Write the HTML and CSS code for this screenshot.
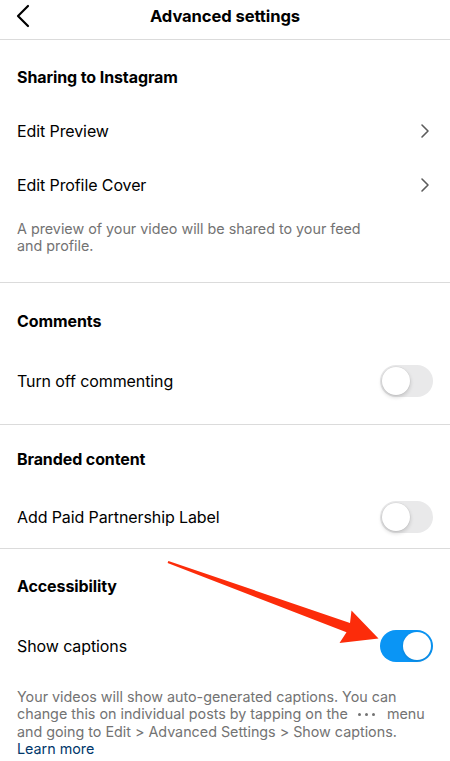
FILE: index.html
```html
<!DOCTYPE html>
<html lang="en">
<head>
<meta charset="utf-8">
<title>Advanced settings</title>
<link rel="stylesheet" href="styles.css">
</head>
<body>
<div class="screen">
  <header class="topbar">
    <button class="back" aria-label="Back">
      <svg width="16" height="24" viewBox="0 0 16 24"><path d="M13 2 L3 12 L13 22" fill="none" stroke="#000" stroke-width="2.2" stroke-linecap="round" stroke-linejoin="round"/></svg>
    </button>
    <h1 class="title">Advanced settings</h1>
  </header>

  <section class="section s1">
    <h2 class="sec-title">Sharing to Instagram</h2>
    <div class="rows g1">
      <div class="row">
        <span class="label">Edit Preview</span>
        <svg class="chev" width="10" height="16" viewBox="0 0 10 16"><path d="M2 2 L8 8 L2 14" fill="none" stroke="#5c5c5c" stroke-width="1.6" stroke-linecap="round" stroke-linejoin="round"/></svg>
      </div>
      <div class="row">
        <span class="label">Edit Profile Cover</span>
        <svg class="chev" width="10" height="16" viewBox="0 0 10 16"><path d="M2 2 L8 8 L2 14" fill="none" stroke="#5c5c5c" stroke-width="1.6" stroke-linecap="round" stroke-linejoin="round"/></svg>
      </div>
    </div>
    <p class="desc d1">A preview of your video will be shared to your feed<br>and profile.</p>
  </section>

  <section class="section s2">
    <h2 class="sec-title">Comments</h2>
    <div class="rows g2">
      <div class="row">
        <span class="label">Turn off commenting</span>
        <span class="switch"><span class="knob"></span></span>
      </div>
    </div>
  </section>

  <section class="section s3">
    <h2 class="sec-title">Branded content</h2>
    <div class="rows g3">
      <div class="row">
        <span class="label">Add Paid Partnership Label</span>
        <span class="switch"><span class="knob"></span></span>
      </div>
    </div>
  </section>

  <section class="section s4">
    <h2 class="sec-title">Accessibility</h2>
    <div class="rows g2">
      <div class="row">
        <span class="label">Show captions</span>
        <span class="switch on"><span class="knob"></span></span>
      </div>
    </div>
    <p class="desc d4">Your videos will show auto-generated captions. You can<br>change this on individual posts by tapping on the <span class="dots"><i></i><i></i><i></i></span> menu<br>and going to Edit &gt; Advanced Settings &gt; Show captions.<br><a class="learn" href="#">Learn more</a></p>
  </section>

  <svg class="arrow" width="450" height="761" viewBox="0 0 450 761" aria-hidden="true">
    <polygon points="168.4,560.9 350,623 351.5,610.5 378.5,638.5 339.5,643 346.5,632.2 167.6,563.1" fill="#fc2c0a"/>
  </svg>
</div>
</body>
</html>
```

FILE: styles.css
```css
* { box-sizing: border-box; }
html, body { margin: 0; padding: 0; background: #fff; }
body {
  font-family: Inter, "Noto Sans", "Liberation Sans", sans-serif;
  color: #000;
  -webkit-font-smoothing: antialiased;
}
.screen {
  position: relative;
  width: 450px;
  height: 761px;
  overflow: hidden;
}
.topbar {
  height: 40px;
  border-bottom: 1px solid #dbdbdb;
  display: flex;
  align-items: center;
  justify-content: center;
  position: relative;
}
.back {
  position: absolute;
  left: 15px;
  top: 4px;
  padding: 0;
  border: 0;
  background: none;
  display: flex;
}
.title {
  margin: 0;
  font-size: 16.6px;
  font-weight: 700;
  line-height: 20px;
  padding-bottom: 8px;
  letter-spacing: -0.1px;
}
.section {
  border-bottom: 1px solid #dbdbdb;
  padding: 0 17px;
}
.sec-title {
  margin: 0;
  font-size: 16px;
  font-weight: 700;
  line-height: 20px;
  letter-spacing: -0.1px;
}
.rows { display: flex; flex-direction: column; }
.row {
  height: 54px;
  display: flex;
  align-items: center;
  justify-content: space-between;
}
.label {
  font-size: 16px;
  line-height: 20px;
  letter-spacing: -0.1px;
}
.chev { margin-right: 3px; }
.desc {
  margin: 0;
  font-size: 14.35px;
  line-height: 17.4px;
  color: #737373;
  letter-spacing: -0.02px;
}
.learn { color: #00376b; text-decoration: none; }
.dots {
  display: inline-flex;
  gap: 4px;
  vertical-align: middle;
  margin: 0 8px 2px 6px;
}
.dots i {
  width: 3px;
  height: 3px;
  border-radius: 50%;
  background: #737373;
  display: block;
}

/* per-section spacing */
.s1 { padding-top: 27px; padding-bottom: 27px; }
.g1 { margin-top: 17px; }
.d1 { margin-top: 8px; }
.s2 { padding-top: 28px; padding-bottom: 16px; }
.g2 { margin-top: 23px; }
.s3 { padding-top: 24px; padding-bottom: 4px; }
.g3 { margin-top: 21px; }
.s4 { padding-top: 27px; border-bottom: 0; }
.d4 { margin-top: 15px; }

.switch {
  width: 53px;
  height: 32px;
  border-radius: 16px;
  background: #e9e9ea;
  position: relative;
  display: block;
  flex: none;
}
.knob {
  position: absolute;
  top: 2px;
  left: 2px;
  width: 28px;
  height: 28px;
  border-radius: 50%;
  background: #fff;
  box-shadow: 0 2px 4px rgba(0,0,0,0.18), 0 0 0 0.5px rgba(0,0,0,0.06);
}
.switch.on { background: #0a95f5; }
.switch.on .knob { left: 23px; box-shadow: 0 1px 3px rgba(0,0,0,0.15); }

.arrow {
  position: absolute;
  left: 0;
  top: 0;
  pointer-events: none;
}
```
